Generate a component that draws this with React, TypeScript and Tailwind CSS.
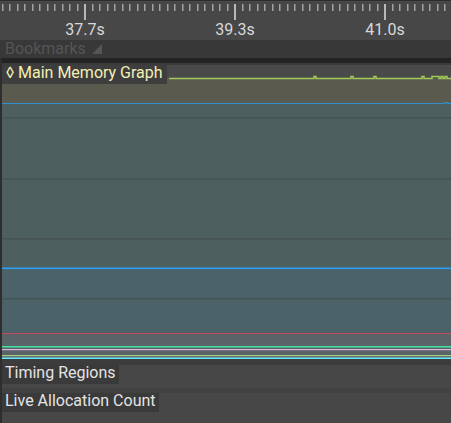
import React from "react";

// Timeline ruler ticks: one every 7.5px, a major one every 150px
const TICK_STEP = 7.5;
const TICK_START = 2.5;
const MAJORS = [
  { x: 85, label: "37.7s" },
  { x: 235, label: "39.3s" },
  { x: 385, label: "41.0s" },
];

function Ruler() {
  const ticks: number[] = [];
  for (let x = TICK_START; x < 451; x += TICK_STEP) ticks.push(x);

  return (
    <div className="relative h-[40px] bg-[#474747] border-t border-[#2c2c2c]">
      <svg className="absolute inset-0" width={451} height={40}>
        {ticks.map((x, i) => {
          const major = MAJORS.some((m) => Math.abs(m.x - x) < 1);
          return (
            <rect
              key={i}
              x={Math.round(x) - 1}
              y={3}
              width={major ? 2 : 1.5}
              height={major ? 16 : 7}
              fill={major ? "#b8b8b8" : "#a2a2a2"}
            />
          );
        })}
      </svg>
      {MAJORS.map((m) => (
        <span
          key={m.label}
          className="absolute top-[19px] -translate-x-1/2 text-[16px] leading-[20px] text-[#d8d8d8]"
          style={{ left: m.x }}
        >
          {m.label}
        </span>
      ))}
    </div>
  );
}

function MemoryGraph() {
  const green =
    "M167 13.5 H312 V11.5 H314 V13.5 H349 V11.5 H351 V13.5 H372 V11.5 H374 V13.5 H420 V11.5 H422 V13.5 H430 V11.5 H437 V13.5 H439 V11.5 H441 V13.5 H443 V11.5 H445 V13.5 H451";

  return (
    <div className="relative h-[294px]">
      <svg className="block" width={451} height={294}>
        {/* area fills */}
        <rect x={0} y={0} width={451} height={13} fill="#4a4a4a" />
        <rect x={0} y={13} width={451} height={25} fill="#5a5a4e" />
        <rect x={0} y={38} width={451} height={165} fill="#4e5f5f" />
        <rect x={0} y={203} width={451} height={65} fill="#4b6269" />
        <rect x={0} y={268} width={451} height={26} fill="#5a6368" />

        {/* grid */}
        {[52, 113, 173, 233].map((y) => (
          <rect key={y} x={0} y={y} width={451} height={1.5} fill="#465453" />
        ))}

        {/* series */}
        <path d={green} fill="none" stroke="#a3c95a" strokeWidth={1.5} />
        <path d="M0 38.5 H443 V37.5 H446 V38.5 H451" fill="none" stroke="#2f8fcf" strokeWidth={1.2} />
        <rect x={0} y={202.5} width={451} height={1.6} fill="#2aa0f2" />
        <rect x={0} y={268} width={451} height={1} fill="#c44a5a" />
        <rect x={0} y={281} width={451} height={1.5} fill="#40e4a0" />
        <rect x={0} y={284} width={451} height={1.2} fill="#d9b2db" />
        <rect x={0} y={290} width={451} height={1.2} fill="#a6cc84" />
        <rect x={0} y={292.5} width={451} height={1.6} fill="#66e8ff" />
      </svg>

      <div className="absolute left-0 top-0 flex h-[19px] w-[165px] items-start bg-[#3e3e3e] pl-[4px] text-[16px] leading-[16px] text-[#f2f0b4] whitespace-nowrap">
        ◊ Main Memory Graph
      </div>
    </div>
  );
}

function Track({ name, height }: { name: string; height: string }) {
  return (
    <div className={`flex items-start bg-[#474747] ${height}`}>
      <div className="h-[19px] bg-[#3a3a3a] px-[3px] text-[16px] leading-[16px] text-[#e4e4e4] whitespace-nowrap">
        {name}
      </div>
    </div>
  );
}

export default function App() {
  return (
    <div
      className="h-[423px] w-[451px] overflow-hidden bg-[#474747] select-none"
      style={{ fontFamily: "Roboto, 'Noto Sans', sans-serif" }}
    >
      <Ruler />

      <div className="flex h-[18px] items-center bg-[#383838] pl-[5px] text-[16px] leading-[18px] text-[#555555]">
        Bookmarks
        <svg className="ml-[6px]" width={10} height={10} viewBox="0 0 10 10">
          <path d="M10 0 L10 10 L0 10 Z" fill="#555555" />
        </svg>
      </div>

      <div className="border-l-2 border-[#2e2e2e]">
        <div className="h-[5px] bg-[#232323]" />
        <div className="h-[2px] bg-[#3b3b3b]" />
        <MemoryGraph />
        <div className="h-[6px] bg-[#3c3c3c]" />
        <Track name="Timing Regions" height="h-[23px]" />
        <div className="h-[5px] bg-[#414141]" />
        <Track name="Live Allocation Count" height="h-[30px]" />
      </div>
    </div>
  );
}
